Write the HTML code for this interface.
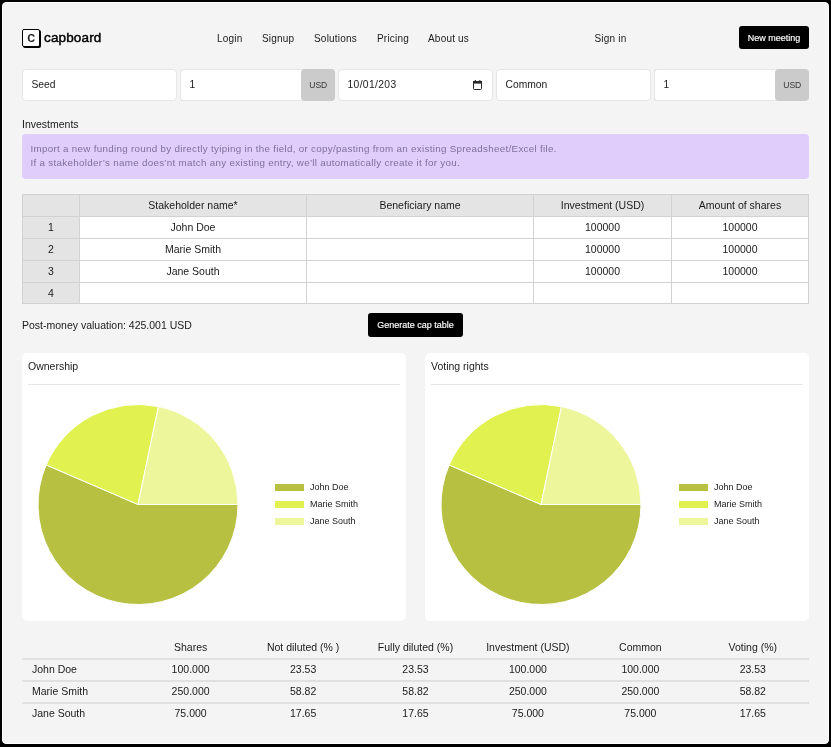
<!DOCTYPE html>
<html><head><meta charset="utf-8">
<style>
*{box-sizing:border-box;margin:0;padding:0}
html,body{width:831px;height:747px;overflow:hidden;background:#000}
body{will-change:transform}
body{font-family:"Liberation Sans",sans-serif;color:#1a1a1a;position:relative}
.page{position:absolute;left:2px;top:2px;width:827px;height:742px;background:#f4f4f4;border:1px solid #fff;border-radius:4px;overflow:hidden}
.abs{position:absolute;white-space:nowrap}
.logo-box{position:absolute;left:22px;top:29px;width:18px;height:18px;border:1px solid #000;border-radius:2px;background:#fff;box-shadow:1px 1px 0 #000;font-weight:normal;-webkit-text-stroke:0.2px #000;font-size:15.5px;line-height:13.5px;text-align:center}
.brand{left:44px;top:29px;font-size:13.5px;font-weight:normal;-webkit-text-stroke:0.45px #000;letter-spacing:0.15px;line-height:18px;color:#000}
.nav{top:33px;font-size:10px;letter-spacing:0.2px;line-height:12px;color:#1a1a1a}
.btn{position:absolute;background:#000;color:#fff;border-radius:3px;font-size:9px;text-align:center;-webkit-text-stroke:0.15px #fff}
.inp{position:absolute;top:69px;width:155px;height:32px;background:#fff;border:1px solid #e6e6e6;border-radius:4px;font-size:10.3px;line-height:30px;padding-left:8.5px;color:#222}
.inp.grp{border-radius:0 4px 4px 0}
.inp.grp::before{content:"";position:absolute;left:0;top:0;width:6px;bottom:0;background:#e8e8e8}
.inp.grp::after{content:"";position:absolute;left:0;top:0;width:8px;bottom:0;background:#fff;border-radius:3px 0 0 3px}
.cal{position:absolute;left:134px;top:10px}
.usd{position:absolute;top:69px;height:32px;width:34px;background:#cbcbcb;border-radius:4px;font-size:8.6px;line-height:32px;text-align:center;color:#383838;padding-left:0.5px}

.lbl{font-size:10.5px;line-height:12px}
.info{position:absolute;left:22px;top:134px;width:787px;height:45px;background:#e0cdfc;border-radius:4px;color:#7f6f99;font-size:9.8px;letter-spacing:0.3px;line-height:14px;padding:8.2px 0 0 8.5px;white-space:nowrap}
table.grid{position:absolute;left:22px;top:194px;border-collapse:collapse;font-size:10.5px;color:#1a1a1a}
table.grid td{border:1px solid #d2d2d2;text-align:center;height:22px;padding:0 0 1px 0;background:#fff}
table.grid tr.last td{height:21px}
table.grid tr.h td{background:#e4e4e4}
table.grid td.n{background:#e4e4e4}
.card{position:absolute;top:353px;width:384px;height:268px;background:#fff;border-radius:5px}
.card .t{position:absolute;left:6px;top:7px;font-size:10.5px;line-height:12px}
.card .sep{position:absolute;left:6px;right:6px;top:31px;height:1px;background:#e6e6e6}
.card svg{position:absolute;left:15px;top:50px}
.leg{position:absolute;font-size:9px;line-height:10px;margin-top:1px}
.sw{position:absolute;width:29px;height:7px}
.sum{position:absolute;font-size:10.5px;line-height:12px;text-align:center;white-space:nowrap}
.hl{position:absolute;left:22px;width:787px;height:2px;background:#e0e0e0}
</style></head><body>
<div class="page"></div>
<!-- header -->
<div class="logo-box">c</div>
<div class="abs brand">capboard</div>
<div class="abs nav" style="left:217px">Login</div>
<div class="abs nav" style="left:262px">Signup</div>
<div class="abs nav" style="left:314px">Solutions</div>
<div class="abs nav" style="left:377px">Pricing</div>
<div class="abs nav" style="left:428px">About us</div>
<div class="abs nav" style="left:594.5px">Sign in</div>
<div class="btn" style="left:739px;top:26px;width:70px;height:23px;line-height:24px">New meeting</div>

<!-- inputs -->
<div class="inp" style="left:22px">Seed</div>
<div class="inp grp" style="left:180px">1</div>
<div class="usd" style="left:301px">USD</div>
<div class="inp" style="left:338px;letter-spacing:0.35px">10/01/203<svg class="cal" width="9" height="10" viewBox="0 0 9 10"><rect x="0.5" y="1.5" width="8" height="8" rx="1" fill="none" stroke="#2a2a2a" stroke-width="1"/><rect x="0" y="1" width="9" height="2.6" fill="#2a2a2a"/><rect x="1.8" y="0" width="1.1" height="2" fill="#2a2a2a"/><rect x="6.3" y="0" width="1.1" height="2" fill="#2a2a2a"/></svg></div>
<div class="inp" style="left:496px">Common</div>
<div class="inp grp" style="left:654px">1</div>
<div class="usd" style="left:775px">USD</div>

<!-- investments -->
<div class="abs lbl" style="left:22px;top:118px">Investments</div>
<div class="info">Import a new funding round by directly tyiping in the field, or copy/pasting from an existing Spreadsheet/Excel file.<br>If a stakeholder’s name does’nt match any existing entry, we’ll automatically create it for you.</div>

<table class="grid">
<colgroup><col style="width:57px"><col style="width:227px"><col style="width:227px"><col style="width:138px"><col style="width:137px"></colgroup>
<tr class="h"><td></td><td>Stakeholder name*</td><td>Beneficiary name</td><td>Investment (USD)</td><td>Amount of shares</td></tr>
<tr><td class="n">1</td><td>John Doe</td><td></td><td>100000</td><td>100000</td></tr>
<tr><td class="n">2</td><td>Marie Smith</td><td></td><td>100000</td><td>100000</td></tr>
<tr><td class="n">3</td><td>Jane South</td><td></td><td>100000</td><td>100000</td></tr>
<tr class="last"><td class="n">4</td><td></td><td></td><td></td><td></td></tr>
</table>

<div class="abs lbl" style="left:22px;top:319px">Post-money valuation: 425.001 USD</div>
<div class="btn" style="left:368px;top:313px;width:95px;height:24px;line-height:24px">Generate cap table</div>

<div class="card" style="left:22px">
<div class="t">Ownership</div><div class="sep"></div>
<svg width="202" height="202" viewBox="-1 -1.5 202 202"><g stroke="#fff" stroke-width="1" stroke-linejoin="round">
<path fill="#b7c041" d="M100 100 L200.00 100.00 A100 100 0 1 1 8.16 60.45 Z"/>
<path fill="#e1f250" d="M100 100 L8.16 60.45 A100 100 0 0 1 120.45 2.11 Z"/>
<path fill="#edf69b" d="M100 100 L120.45 2.11 A100 100 0 0 1 200.00 100.00 Z"/>
</g></svg>
<div class="sw" style="left:253px;top:131px;background:#b7c041"></div>
<div class="sw" style="left:253px;top:148px;background:#e1f250"></div>
<div class="sw" style="left:253px;top:165px;background:#edf69b"></div>
<div class="leg" style="left:288px;top:128px">John Doe</div>
<div class="leg" style="left:288px;top:145px">Marie Smith</div>
<div class="leg" style="left:288px;top:162px">Jane South</div>
</div>
<div class="card" style="left:425px">
<div class="t">Voting rights</div><div class="sep"></div>
<svg width="202" height="202" viewBox="-1 -1.5 202 202"><g stroke="#fff" stroke-width="1" stroke-linejoin="round">
<path fill="#b7c041" d="M100 100 L200.00 100.00 A100 100 0 1 1 8.16 60.45 Z"/>
<path fill="#e1f250" d="M100 100 L8.16 60.45 A100 100 0 0 1 120.45 2.11 Z"/>
<path fill="#edf69b" d="M100 100 L120.45 2.11 A100 100 0 0 1 200.00 100.00 Z"/>
</g></svg>
<div class="sw" style="left:254px;top:131px;background:#b7c041"></div>
<div class="sw" style="left:254px;top:148px;background:#e1f250"></div>
<div class="sw" style="left:254px;top:165px;background:#edf69b"></div>
<div class="leg" style="left:289px;top:128px">John Doe</div>
<div class="leg" style="left:289px;top:145px">Marie Smith</div>
<div class="leg" style="left:289px;top:162px">Jane South</div>
</div>

<div class="sum" style="left:134.6px;width:112px;top:641px">Shares</div>
<div class="sum" style="left:247.10000000000002px;width:112px;top:641px">Not diluted (% )</div>
<div class="sum" style="left:359.5px;width:112px;top:641px">Fully diluted (%)</div>
<div class="sum" style="left:471.9px;width:112px;top:641px">Investment (USD)</div>
<div class="sum" style="left:584.4px;width:112px;top:641px">Common</div>
<div class="sum" style="left:696.8px;width:112px;top:641px">Voting (%)</div>
<div class="sum" style="left:32px;top:663px;text-align:left">John Doe</div>
<div class="sum" style="left:134.6px;width:112px;top:663px">100.000</div>
<div class="sum" style="left:247.10000000000002px;width:112px;top:663px">23.53</div>
<div class="sum" style="left:359.5px;width:112px;top:663px">23.53</div>
<div class="sum" style="left:471.9px;width:112px;top:663px">100.000</div>
<div class="sum" style="left:584.4px;width:112px;top:663px">100.000</div>
<div class="sum" style="left:696.8px;width:112px;top:663px">23.53</div>
<div class="sum" style="left:32px;top:685px;text-align:left">Marie Smith</div>
<div class="sum" style="left:134.6px;width:112px;top:685px">250.000</div>
<div class="sum" style="left:247.10000000000002px;width:112px;top:685px">58.82</div>
<div class="sum" style="left:359.5px;width:112px;top:685px">58.82</div>
<div class="sum" style="left:471.9px;width:112px;top:685px">250.000</div>
<div class="sum" style="left:584.4px;width:112px;top:685px">250.000</div>
<div class="sum" style="left:696.8px;width:112px;top:685px">58.82</div>
<div class="sum" style="left:32px;top:707px;text-align:left">Jane South</div>
<div class="sum" style="left:134.6px;width:112px;top:707px">75.000</div>
<div class="sum" style="left:247.10000000000002px;width:112px;top:707px">17.65</div>
<div class="sum" style="left:359.5px;width:112px;top:707px">17.65</div>
<div class="sum" style="left:471.9px;width:112px;top:707px">75.000</div>
<div class="sum" style="left:584.4px;width:112px;top:707px">75.000</div>
<div class="sum" style="left:696.8px;width:112px;top:707px">17.65</div>
<div class="hl" style="top:658px"></div>
<div class="hl" style="top:680px"></div>
<div class="hl" style="top:702px"></div>

</body></html>
